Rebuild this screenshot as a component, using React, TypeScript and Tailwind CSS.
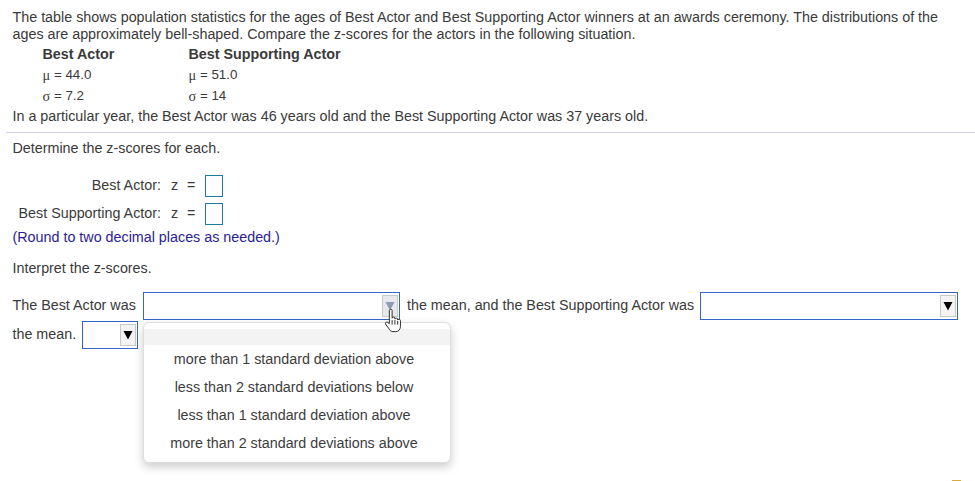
function Arrow({ faded = false }: { faded?: boolean }) {
  return (
    <div className={`flex h-[22px] w-[16px] items-center justify-center border border-[#c9c9c9] ${faded ? "bg-[#e8e9ee]" : "bg-[#f3f3f3]"}`}>
      <svg width="10" height="10" viewBox="0 0 10 10">
        <path d="M0.5 1 H9.5 L5 9.5 Z" fill={faded ? "#8f9bb3" : "#000"} />
      </svg>
    </div>
  );
}

function Select({ width, faded = false }: { width: string; faded?: boolean }) {
  return (
    <div className={`flex h-[28px] items-center justify-end border border-[#3366cc] bg-white pr-[1px] ${width}`}>
      <Arrow faded={faded} />
    </div>
  );
}

function Box() {
  return <div className="h-[22px] w-[18px] border border-[#1f7a96] bg-white" />;
}

function ZRow({ label }: { label: string }) {
  return (
    <div className="flex h-[28px] items-center">
      <div className="w-[148.5px] whitespace-nowrap pb-[2px] text-right">{label}</div>
      <div className="ml-[10px] w-[16px] pb-[2px]">z</div>
      <div className="w-[18px] pb-[2px]">=</div>
      <Box />
    </div>
  );
}

function Stat({ symbol, value }: { symbol: string; value: string }) {
  return (
    <div className="flex h-[21px] items-center text-[13.33px]">
      <span className="font-['Liberation_Serif',serif] text-[14.32px]">{symbol}</span>&nbsp;= {value}
    </div>
  );
}

export default function App() {
  const options = [
    "more than 1 standard deviation above",
    "less than 2 standard deviations below",
    "less than 1 standard deviation above",
    "more than 2 standard deviations above",
  ];
  return (
    <div className="relative h-[481px] w-[975px] overflow-hidden bg-white font-['Liberation_Sans',Arial,sans-serif] text-[14.32px] leading-[16.5px] text-[#3a3a3a]">
      <div className="px-[12.5px] pt-[9px]">
        <p className="whitespace-nowrap">
          The table shows population statistics for the ages of Best Actor and Best Supporting Actor winners at an awards ceremony. The distributions of the
          <br />
          ages are approximately bell-shaped. Compare the z-scores for the actors in the following situation.
        </p>
        <div className="mt-[2px] grid grid-cols-[146px_1fr] pl-[30px]">
          <div className="flex h-[21px] items-center font-bold">Best Actor</div>
          <div className="flex h-[21px] items-center font-bold">Best Supporting Actor</div>
          <Stat symbol="μ" value="44.0" />
          <Stat symbol="μ" value="51.0" />
          <Stat symbol="σ" value="7.2" />
          <Stat symbol="σ" value="14" />
        </div>
        <p className="mt-[1px] whitespace-nowrap">In a particular year, the Best Actor was 46 years old and the Best Supporting Actor was 37 years old.</p>
      </div>
      <div className="ml-[6px] mt-[7px] h-px bg-[#cfd3e3]" />
      <div className="px-[12.5px] pt-[7px]">
        <p>Determine the z-scores for each.</p>
        <div className="mt-[16px]">
          <ZRow label="Best Actor:" />
          <ZRow label="Best Supporting Actor:" />
        </div>
        <p className="mt-[1px] text-[#2b2394]">(Round to two decimal places as needed.)</p>
        <p className="mt-[14px]">Interpret the z-scores.</p>
        <div className="mt-[16px] flex h-[28px] items-center">
          <span className="w-[130.5px] whitespace-nowrap pb-[2px]">The Best Actor was</span>
          <Select width="w-[257px]" faded />
          <span className="ml-[7px] w-[293px] whitespace-nowrap pb-[2px]">the mean, and the Best Supporting Actor was</span>
          <Select width="w-[258px]" />
        </div>
        <div className="mt-[1px] flex h-[28px] items-center">
          <span className="w-[69.5px] whitespace-nowrap pb-[1px]">the mean.</span>
          <Select width="w-[56px]" />
        </div>
      </div>

      <div className="absolute left-[143px] top-[322px] h-[141px] w-[308px] rounded-[6px] border border-[#dedede] bg-white pt-[6px] text-center shadow-[0_4px_10px_rgba(0,0,0,0.2)]">
        <div className="h-[16px] bg-[#f3f3f3]" />
        {options.map((o) => (
          <div key={o} className="flex h-[28px] items-center justify-center whitespace-nowrap pr-[6px] text-[#3d3d3d]">
            {o}
          </div>
        ))}
      </div>

      <svg className="absolute left-[384px] top-[308px]" width="19" height="25" viewBox="0 0 20 27">
        <path
          d="M5.5 2.5 C5.5 1 8.5 1 8.5 2.5 V11 C9 9.5 11.5 9.5 11.5 11 V12 C12 10.5 14.5 10.5 14.5 12 V13 C15 11.5 17.5 12 17.5 13.5 V20 C17.5 23 15.5 25.5 12.5 25.5 H9.5 C7.5 25.5 6.5 24.5 5.5 23 L1.5 17.5 C0.5 16 2.5 14.5 3.8 15.5 L5.5 17 Z"
          fill="#fff"
          stroke="#222"
          strokeWidth="1"
        />
        <path d="M8.5 13 V18 M11.5 13 V18 M14.5 14 V18" stroke="#222" strokeWidth="1" fill="none" />
      </svg>

      <div className="absolute left-[952px] top-[480px] h-px w-[9px] bg-[#d9a93c]" />
    </div>
  );
}
